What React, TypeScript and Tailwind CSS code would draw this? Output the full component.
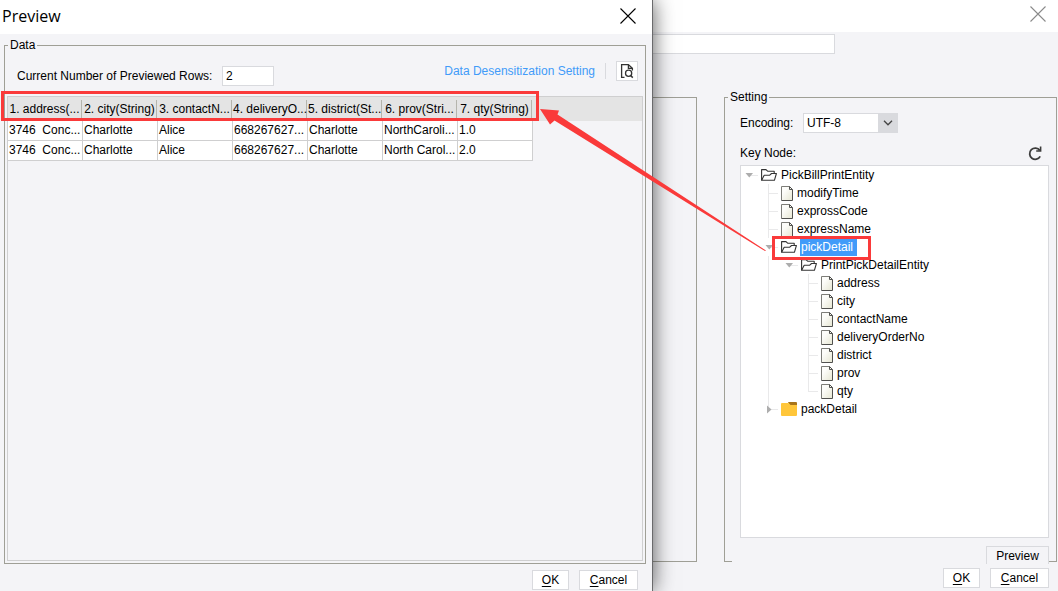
import { useState } from "react";

type Cell = "blank" | "line" | "tee" | "elbow" | "open" | "closed";
type NodeIcon = "file" | "folderOpen" | "folder";

interface TreeRow {
  label: string;
  cells: Cell[];
  icon: NodeIcon;
}

const columns = [
  "1. address(...",
  "2. city(String)",
  "3. contactN...",
  "4. deliveryO...",
  "5. district(St...",
  "6. prov(Stri...",
  "7. qty(String)",
];

const rows = [
  ["3746  Conc...", "Charlotte", "Alice", "668267627...", "Charlotte", "NorthCaroli...", "1.0"],
  ["3746  Conc...", "Charlotte", "Alice", "668267627...", "Charlotte", "North Carol...", "2.0"],
];

const tree: TreeRow[] = [
  { label: "PickBillPrintEntity", cells: ["open"], icon: "folderOpen" },
  { label: "modifyTime", cells: ["blank", "tee"], icon: "file" },
  { label: "exprossCode", cells: ["blank", "tee"], icon: "file" },
  { label: "expressName", cells: ["blank", "tee"], icon: "file" },
  { label: "pickDetail", cells: ["blank", "open"], icon: "folderOpen" },
  { label: "PrintPickDetailEntity", cells: ["blank", "line", "open"], icon: "folderOpen" },
  { label: "address", cells: ["blank", "line", "blank", "tee"], icon: "file" },
  { label: "city", cells: ["blank", "line", "blank", "tee"], icon: "file" },
  { label: "contactName", cells: ["blank", "line", "blank", "tee"], icon: "file" },
  { label: "deliveryOrderNo", cells: ["blank", "line", "blank", "tee"], icon: "file" },
  { label: "district", cells: ["blank", "line", "blank", "tee"], icon: "file" },
  { label: "prov", cells: ["blank", "line", "blank", "tee"], icon: "file" },
  { label: "qty", cells: ["blank", "line", "blank", "elbow"], icon: "file" },
  { label: "packDetail", cells: ["blank", "closed"], icon: "folder" },
];

const CloseIcon: React.FC = () => (
  <svg width="16" height="16" viewBox="0 0 16 16" fill="none" stroke="currentColor" strokeWidth="1.1">
    <path d="M0.5 0.5 15.5 15.5M15.5 0.5 0.5 15.5" />
  </svg>
);

const TreeCell: React.FC<{ cell: Cell }> = ({ cell }) => (
  <svg width="20" height="18" viewBox="0 0 20 18" className="shrink-0" aria-hidden="true">
    <g stroke="#e9e9ea" strokeWidth="1">
      {(cell === "line" || cell === "tee") && <path d="M7.5 0V18" />}
      {(cell === "elbow" || cell === "closed") && <path d="M7.5 0V9.5" />}
      {cell !== "blank" && cell !== "line" && <path d="M7 9.5H17" />}
    </g>
    {cell === "open" && <path d="M4.5 7h7.5L8.3 11.5Z" fill="#adadad" />}
    {cell === "closed" && <path d="M6 5.5 10.5 9.5 6 13.5Z" fill="#adadad" />}
  </svg>
);

const TreeIcon: React.FC<{ icon: NodeIcon }> = ({ icon }) => {
  if (icon === "file") {
    return (
      <svg width="12" height="15" viewBox="0 0 12 15" className="shrink-0" aria-hidden="true">
        <defs>
          <linearGradient id="paper" x1="0" y1="0" x2="1" y2="1">
            <stop offset="0.3" stopColor="#fdfdfa" />
            <stop offset="1" stopColor="#e6e6d2" />
          </linearGradient>
        </defs>
        <path d="M0.5 0.5H8.5L11.5 3.5V14.5H0.5Z" fill="url(#paper)" />
        <path d="M0.5 14.5V0.5H8.5" fill="none" stroke="#7d7d78" />
        <path d="M8.5 0.5V3.5H11.5L8.5 0.5M11.5 3.5V14.5H0.5" fill="none" stroke="#50504e" />
      </svg>
    );
  }
  if (icon === "folder") {
    return (
      <svg width="16" height="14" viewBox="0 0 16 14" className="shrink-0" aria-hidden="true">
        <path d="M7 0H15a1 1 0 0 1 1 1V4H9Z" fill="#a8741a" />
        <path d="M1 1H7.5L9.5 3H16V13a1 1 0 0 1-1 1H1a1 1 0 0 1-1-1V2a1 1 0 0 1 1-1Z" fill="#ffc63a" />
      </svg>
    );
  }
  return (
    <svg
      width="16"
      height="12"
      viewBox="0 0 16 12"
      fill="none"
      stroke="#333333"
      strokeWidth="1.1"
      strokeLinejoin="round"
      className="shrink-0"
      aria-hidden="true"
    >
      <path d="M0.6 11.3V0.6H5L6.6 2.2H13.2V4.4" />
      <path d="M0.6 11.3H13.4L15.4 4.5H10.5L8.5 6.3H3.2L0.6 11.3Z" />
    </svg>
  );
};

const DialogButtons: React.FC = () => (
  <>
    <button className="h-5 w-[37px] border border-[#d9dade] bg-white leading-[18px]">
      <span className="underline underline-offset-2">O</span>K
    </button>
    <button className="h-5 w-[59px] border border-[#d9dade] bg-white leading-[18px]">
      <span className="underline underline-offset-2">C</span>ancel
    </button>
  </>
);

const PreviewDialog: React.FC = () => {
  const [count, setCount] = useState<string>("2");

  return (
    <section className="z-10 flex min-w-0 flex-1 flex-col border-r border-[#6a6a6c] bg-[#f4f4f7] shadow-[0_0_20px_rgba(0,0,0,0.65)]">
      <header className="flex h-[34px] shrink-0 items-center justify-between bg-white pr-4 pb-0.5 pl-0.5">
        <h1 className="font-['Open_Sans',sans-serif] text-base">Preview</h1>
        <button aria-label="Close">
          <CloseIcon />
        </button>
      </header>

      <fieldset className="mt-[3px] mr-1.5 ml-1 flex min-h-0 min-w-0 flex-1 flex-col border border-[#9f9f96] px-0.5 pb-0.5">
        <legend className="ml-px px-0.5 leading-4">Data</legend>
        <div className="flex items-start justify-between pt-2 pr-[5px] pb-[10px] pl-[10px]">
          <div className="flex items-center gap-[5px] pt-[5px]">
            <label htmlFor="count" className="min-w-[200px]">
              Current Number of Previewed Rows:
            </label>
            <input
              id="count"
              value={count}
              onChange={(e) => setCount(e.target.value)}
              className="h-5 w-[52px] border border-[#d9dade] bg-white px-[3px] outline-none"
            />
          </div>
          <div className="flex items-center gap-[10px]">
            <a href="#desensitization" className="text-[#419bf9]">
              Data Desensitization Setting
            </a>
            <span className="h-4 w-px bg-[#d9dade]" />
            <button
              aria-label="Search data"
              className="flex h-5 w-[22px] items-center justify-center border border-[#d9dade] bg-white"
            >
              <svg width="14" height="16" viewBox="0 0 14 16" fill="none" stroke="#333333" strokeWidth="1.3">
                <path d="M4.5 14.4H1.6V1.6H8.4L12.4 5.4V7.5M8.4 1.6V5.4H12.4" />
                <circle cx="8.6" cy="10.2" r="3.1" />
                <path d="M10.6 12.5 12.8 14.6" strokeWidth="1.5" />
              </svg>
            </button>
          </div>
        </div>

        <div className="relative min-h-0 flex-1 border border-[#cfcfd0]">
          <table className="w-full table-fixed border-separate border-spacing-0">
            <colgroup>
              {columns.map((name) => (
                <col key={name} className="w-[75px]" />
              ))}
              <col />
            </colgroup>
            <thead>
              <tr className="h-6 bg-[#e4e4e4]">
                {columns.map((name) => (
                  <th key={name} className="p-0 font-normal whitespace-nowrap">
                    <div className="mr-px h-[18px] border-r border-[#b5b5ad] leading-[18px]">{name}</div>
                  </th>
                ))}
                <td />
              </tr>
            </thead>
            <tbody>
              {rows.map((row, i) => (
                <tr key={i} className="h-5">
                  {row.map((value, j) => (
                    <td
                      key={j}
                      className="border-r border-b border-[#cfcfd0] bg-white p-0 pl-px align-top leading-[18px] whitespace-pre"
                    >
                      {value}
                    </td>
                  ))}
                  <td />
                </tr>
              ))}
            </tbody>
          </table>
          <div className="pointer-events-none absolute -top-1.5 -left-[7px] h-[30px] w-[538px] border-3 border-[#fa3a3a]" />
        </div>
      </fieldset>

      <footer className="flex justify-end gap-[10px] pt-1.5 pr-[14px] pb-px">
        <DialogButtons />
      </footer>
    </section>
  );
};

const SettingDialog: React.FC = () => {
  const [selected, setSelected] = useState<string>("pickDetail");

  return (
    <section className="flex w-[405px] shrink-0 flex-col bg-[#f4f4f7]">
      <header className="flex h-8 shrink-0 items-center justify-end bg-white pr-3 pb-1 text-[#8a8a8a]">
        <button aria-label="Close window">
          <CloseIcon />
        </button>
      </header>

      <div className="pt-0.5">
        <input
          aria-label="Name"
          className="block h-5 w-[182px] border border-l-0 border-[#d9dade] bg-white px-1 outline-none"
        />
      </div>

      <div className="mt-[35px] flex min-h-0 flex-1 gap-[27px] pr-px">
        <div className="mt-2 w-11 shrink-0 border border-l-0 border-[#9f9f96]" />
        <fieldset className="flex min-h-0 min-w-0 flex-1 flex-col border border-[#9f9f96] px-[7px]">
          <legend className="-ml-1 px-0.5 leading-4">Setting</legend>
          <div className="-mb-[3px] flex min-h-0 flex-1 flex-col bg-[#f4f4f7] pt-2 pl-2">
            <div className="flex items-center">
              <label htmlFor="encoding" className="w-[63px]">
                Encoding:
              </label>
              <div className="relative">
                <select
                  id="encoding"
                  className="block h-5 w-[95px] appearance-none border border-[#d9dade] bg-white pl-[3px] outline-none"
                >
                  <option>UTF-8</option>
                </select>
                <span className="pointer-events-none absolute inset-y-0 right-0 flex w-5 items-center justify-center bg-[#d9dade]">
                  <svg width="10" height="6" viewBox="0 0 10 6" fill="none" stroke="#444444" strokeWidth="1.3">
                    <path d="M1 0.8 5 4.8 9 0.8" />
                  </svg>
                </span>
              </div>
            </div>

            <div className="flex h-8 items-center justify-between pt-2 pr-[7px]">
              <span id="key-node">Key Node:</span>
              <button aria-label="Refresh">
                <svg width="14" height="15" viewBox="0 0 14 15" fill="none" stroke="#3c3c3c" strokeWidth="1.8">
                  <path d="M11.8 4.4A5.6 5.6 0 1 0 12.2 10.4" />
                  <path d="M12.6 0.6V5H8.2" strokeWidth="1.6" />
                </svg>
              </button>
            </div>

            <ul
              role="tree"
              aria-labelledby="key-node"
              className="min-h-0 flex-1 border border-[#d9dade] bg-white"
            >
              {tree.map((node) => (
                <li
                  key={node.label}
                  role="treeitem"
                  aria-selected={selected === node.label}
                  onClick={() => setSelected(node.label)}
                  className="relative flex h-[18px] cursor-default items-center"
                >
                  {node.cells.map((cell, i) => (
                    <TreeCell key={i} cell={cell} />
                  ))}
                  <TreeIcon icon={node.icon} />
                  <span
                    className={`ml-[3px] pr-1 pl-px leading-[18px] ${
                      selected === node.label ? "bg-[#419bf9] text-white" : ""
                    }`}
                  >
                    {node.label}
                  </span>
                  {node.label === "pickDetail" && (
                    <span className="pointer-events-none absolute -top-0.5 left-[31px] z-10 h-6 w-[99px] border-3 border-[#fa3a3a]" />
                  )}
                </li>
              ))}
            </ul>

            <div className="flex justify-end pt-2">
              <button className="h-[18px] w-[63px] border border-b-0 border-[#d9dade] leading-[18px]">
                Preview
              </button>
            </div>
          </div>
        </fieldset>
      </div>

      <footer className="flex justify-end gap-[10px] pt-1.5 pr-[9px] pb-[3px]">
        <DialogButtons />
      </footer>
    </section>
  );
};

const App: React.FC = () => {
  return (
    <main className="relative flex h-screen overflow-hidden font-['Liberation_Sans',Arial,sans-serif] text-xs text-black">
      <PreviewDialog />
      <SettingDialog />
      {/* arrow from the selected node to the table header */}
      <svg
        width="520"
        height="260"
        viewBox="538 0 520 260"
        className="pointer-events-none absolute top-0 right-0 z-20"
        aria-hidden="true"
      >
        <polygon
          points="540,109 559,110.5 557.5,114.5 766,250.5 765,251 554.5,120.5 550,124.5"
          fill="#fa3a3a"
        />
      </svg>
    </main>
  );
};

export default App;
